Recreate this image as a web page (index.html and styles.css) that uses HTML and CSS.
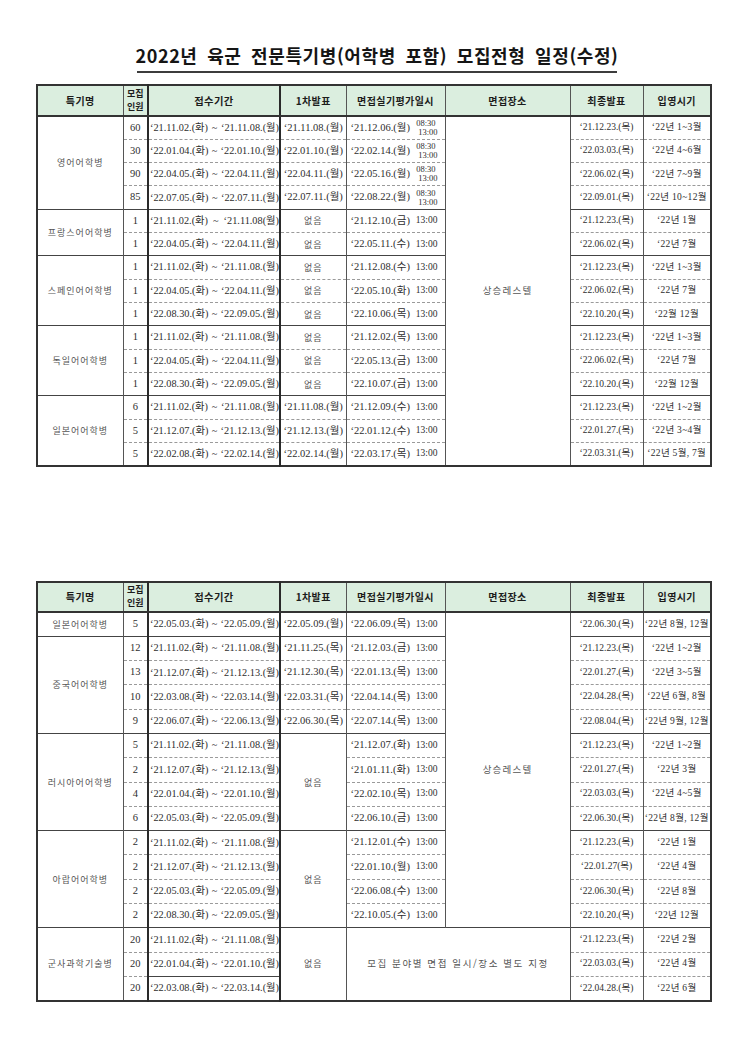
FILE: index.html
```html
<!DOCTYPE html>
<html lang="ko">
<head>
<meta charset="utf-8">
<title>2022년 육군 전문특기병 모집전형 일정</title>
<link rel="stylesheet" href="styles.css">
</head>
<body>
<div class="page">
  <div class="title-wrap">
    <h1 class="title">2022년 육군 전문특기병(어학병 포함) 모집전형 일정(수정)</h1>
    <div class="rule"></div>
  </div>

  <table class="sched t1">
    <colgroup>
      <col class="c-name"><col class="c-cnt"><col class="c-rcv"><col class="c-first"><col class="c-iv"><col class="c-place"><col class="c-fin"><col class="c-ent">
    </colgroup>
    <thead>
      <tr>
        <th>특기명</th><th class="two">모집<br>인원</th><th class="rcv">접수기간</th><th>1차발표</th><th>면접실기평가일시</th><th>면접장소</th><th>최종발표</th><th>입영시기</th>
      </tr>
    </thead>
    <tbody>
      <tr class="g">
        <td class="name" rowspan="4">영어어학병</td><td class="cnt">60</td>
        <td class="rcv"><div class="rng"><span>‘21.11.02.(화)</span><span>~</span><span>‘21.11.08.(월)</span></div></td>
        <td class="dt">‘21.11.08.(월)</td>
        <td><div class="iv"><span>‘21.12.06.(월)</span><span class="tt"><span class="t8">08:30</span><span>13:00</span></span></div></td>
        <td class="place" rowspan="15">상승레스텔</td>
        <td class="fin">‘21.12.23.(목)</td><td class="ent">‘22년 1~3월</td>
      </tr>
      <tr class="s">
        <td class="cnt">30</td>
        <td class="rcv"><div class="rng"><span>‘22.01.04.(화)</span><span>~</span><span>‘22.01.10.(월)</span></div></td>
        <td class="dt">‘22.01.10.(월)</td>
        <td><div class="iv"><span>‘22.02.14.(월)</span><span class="tt"><span class="t8">08:30</span><span>13:00</span></span></div></td>
        <td class="fin">‘22.03.03.(목)</td><td class="ent">‘22년 4~6월</td>
      </tr>
      <tr class="s">
        <td class="cnt">90</td>
        <td class="rcv"><div class="rng"><span>‘22.04.05.(화)</span><span>~</span><span>‘22.04.11.(월)</span></div></td>
        <td class="dt">‘22.04.11.(월)</td>
        <td><div class="iv"><span>‘22.05.16.(월)</span><span class="tt"><span class="t8">08:30</span><span>13:00</span></span></div></td>
        <td class="fin">‘22.06.02.(목)</td><td class="ent">‘22년 7~9월</td>
      </tr>
      <tr class="s">
        <td class="cnt">85</td>
        <td class="rcv"><div class="rng"><span>‘22.07.05.(화)</span><span>~</span><span>‘22.07.11.(월)</span></div></td>
        <td class="dt">‘22.07.11.(월)</td>
        <td><div class="iv"><span>‘22.08.22.(월)</span><span class="tt"><span class="t8">08:30</span><span>13:00</span></span></div></td>
        <td class="fin">‘22.09.01.(목)</td><td class="ent">‘22년 10~12월</td>
      </tr>

      <tr class="g">
        <td class="name" rowspan="2">프랑스어어학병</td><td class="cnt">1</td>
        <td class="rcv"><div class="rng"><span>‘21.11.02.(화)</span><span>~</span><span>‘21.11.08(월)</span></div></td>
        <td class="ko">없음</td>
        <td><div class="iv"><span>‘21.12.10.(금)</span><span class="tm">13:00</span></div></td>
        <td class="fin">‘21.12.23.(목)</td><td class="ent">‘22년 1월</td>
      </tr>
      <tr class="s">
        <td class="cnt">1</td>
        <td class="rcv"><div class="rng"><span>‘22.04.05.(화)</span><span>~</span><span>‘22.04.11.(월)</span></div></td>
        <td class="ko">없음</td>
        <td><div class="iv"><span>‘22.05.11.(수)</span><span class="tm">13:00</span></div></td>
        <td class="fin">‘22.06.02.(목)</td><td class="ent">‘22년 7월</td>
      </tr>

      <tr class="g">
        <td class="name" rowspan="3">스페인어어학병</td><td class="cnt">1</td>
        <td class="rcv"><div class="rng"><span>‘21.11.02.(화)</span><span>~</span><span>‘21.11.08.(월)</span></div></td>
        <td class="ko">없음</td>
        <td><div class="iv"><span>‘21.12.08.(수)</span><span class="tm">13:00</span></div></td>
        <td class="fin">‘21.12.23.(목)</td><td class="ent">‘22년 1~3월</td>
      </tr>
      <tr class="s">
        <td class="cnt">1</td>
        <td class="rcv"><div class="rng"><span>‘22.04.05.(화)</span><span>~</span><span>‘22.04.11.(월)</span></div></td>
        <td class="ko">없음</td>
        <td><div class="iv"><span>‘22.05.10.(화)</span><span class="tm">13:00</span></div></td>
        <td class="fin">‘22.06.02.(목)</td><td class="ent">‘22년 7월</td>
      </tr>
      <tr class="s">
        <td class="cnt">1</td>
        <td class="rcv"><div class="rng"><span>‘22.08.30.(화)</span><span>~</span><span>‘22.09.05.(월)</span></div></td>
        <td class="ko">없음</td>
        <td><div class="iv"><span>‘22.10.06.(목)</span><span class="tm">13:00</span></div></td>
        <td class="fin">‘22.10.20.(목)</td><td class="ent">‘22월 12월</td>
      </tr>

      <tr class="g">
        <td class="name" rowspan="3">독일어어학병</td><td class="cnt">1</td>
        <td class="rcv"><div class="rng"><span>‘21.11.02.(화)</span><span>~</span><span>‘21.11.08.(월)</span></div></td>
        <td class="ko">없음</td>
        <td><div class="iv"><span>‘21.12.02.(목)</span><span class="tm">13:00</span></div></td>
        <td class="fin">‘21.12.23.(목)</td><td class="ent">‘22년 1~3월</td>
      </tr>
      <tr class="s">
        <td class="cnt">1</td>
        <td class="rcv"><div class="rng"><span>‘22.04.05.(화)</span><span>~</span><span>‘22.04.11.(월)</span></div></td>
        <td class="ko">없음</td>
        <td><div class="iv"><span>‘22.05.13.(금)</span><span class="tm">13:00</span></div></td>
        <td class="fin">‘22.06.02.(목)</td><td class="ent">‘22년 7월</td>
      </tr>
      <tr class="s">
        <td class="cnt">1</td>
        <td class="rcv"><div class="rng"><span>‘22.08.30.(화)</span><span>~</span><span>‘22.09.05.(월)</span></div></td>
        <td class="ko">없음</td>
        <td><div class="iv"><span>‘22.10.07.(금)</span><span class="tm">13:00</span></div></td>
        <td class="fin">‘22.10.20.(목)</td><td class="ent">‘22월 12월</td>
      </tr>

      <tr class="g">
        <td class="name" rowspan="3">일본어어학병</td><td class="cnt">6</td>
        <td class="rcv"><div class="rng"><span>‘21.11.02.(화)</span><span>~</span><span>‘21.11.08.(월)</span></div></td>
        <td class="dt">‘21.11.08.(월)</td>
        <td><div class="iv"><span>‘21.12.09.(수)</span><span class="tm">13:00</span></div></td>
        <td class="fin">‘21.12.23.(목)</td><td class="ent">‘22년 1~2월</td>
      </tr>
      <tr class="s">
        <td class="cnt">5</td>
        <td class="rcv"><div class="rng"><span>‘21.12.07.(화)</span><span>~</span><span>‘21.12.13.(월)</span></div></td>
        <td class="dt">‘21.12.13.(월)</td>
        <td><div class="iv"><span>‘22.01.12.(수)</span><span class="tm">13:00</span></div></td>
        <td class="fin">‘22.01.27.(목)</td><td class="ent">‘22년 3~4월</td>
      </tr>
      <tr class="s">
        <td class="cnt">5</td>
        <td class="rcv"><div class="rng"><span>‘22.02.08.(화)</span><span>~</span><span>‘22.02.14.(월)</span></div></td>
        <td class="dt">‘22.02.14.(월)</td>
        <td><div class="iv"><span>‘22.03.17.(목)</span><span class="tm">13:00</span></div></td>
        <td class="fin">‘22.03.31.(목)</td><td class="ent">‘22년 5월, 7월</td>
      </tr>
    </tbody>
  </table>

  <table class="sched t2">
    <colgroup>
      <col class="c-name"><col class="c-cnt"><col class="c-rcv"><col class="c-first"><col class="c-iv"><col class="c-place"><col class="c-fin"><col class="c-ent">
    </colgroup>
    <thead>
      <tr>
        <th>특기명</th><th class="two">모집<br>인원</th><th class="rcv">접수기간</th><th>1차발표</th><th>면접실기평가일시</th><th>면접장소</th><th>최종발표</th><th>입영시기</th>
      </tr>
    </thead>
    <tbody>
      <tr class="g">
        <td class="name">일본어어학병</td><td class="cnt">5</td>
        <td class="rcv"><div class="rng"><span>‘22.05.03.(화)</span><span>~</span><span>‘22.05.09.(월)</span></div></td>
        <td class="dt">‘22.05.09.(월)</td>
        <td><div class="iv"><span>‘22.06.09.(목)</span><span class="tm">13:00</span></div></td>
        <td class="place" rowspan="13">상승레스텔</td>
        <td class="fin">‘22.06.30.(목)</td><td class="ent">‘22년 8월, 12월</td>
      </tr>

      <tr class="g">
        <td class="name" rowspan="4">중국어어학병</td><td class="cnt">12</td>
        <td class="rcv"><div class="rng"><span>‘21.11.02.(화)</span><span>~</span><span>‘21.11.08.(월)</span></div></td>
        <td class="dt">‘21.11.25.(목)</td>
        <td><div class="iv"><span>‘21.12.03.(금)</span><span class="tm">13:00</span></div></td>
        <td class="fin">‘21.12.23.(목)</td><td class="ent">‘22년 1~2월</td>
      </tr>
      <tr class="s">
        <td class="cnt">13</td>
        <td class="rcv"><div class="rng"><span>‘21.12.07.(화)</span><span>~</span><span>‘21.12.13.(월)</span></div></td>
        <td class="dt">‘21.12.30.(목)</td>
        <td><div class="iv"><span>‘22.01.13.(목)</span><span class="tm">13:00</span></div></td>
        <td class="fin">‘22.01.27.(목)</td><td class="ent">‘22년 3~5월</td>
      </tr>
      <tr class="s">
        <td class="cnt">10</td>
        <td class="rcv"><div class="rng"><span>‘22.03.08.(화)</span><span>~</span><span>‘22.03.14.(월)</span></div></td>
        <td class="dt">‘22.03.31.(목)</td>
        <td><div class="iv"><span>‘22.04.14.(목)</span><span class="tm">13:00</span></div></td>
        <td class="fin">‘22.04.28.(목)</td><td class="ent">‘22년 6월, 8월</td>
      </tr>
      <tr class="s">
        <td class="cnt">9</td>
        <td class="rcv"><div class="rng"><span>‘22.06.07.(화)</span><span>~</span><span>‘22.06.13.(월)</span></div></td>
        <td class="dt">‘22.06.30.(목)</td>
        <td><div class="iv"><span>‘22.07.14.(목)</span><span class="tm">13:00</span></div></td>
        <td class="fin">‘22.08.04.(목)</td><td class="ent">‘22년 9월, 12월</td>
      </tr>

      <tr class="g">
        <td class="name" rowspan="4">러시아어어학병</td><td class="cnt">5</td>
        <td class="rcv"><div class="rng"><span>‘21.11.02.(화)</span><span>~</span><span>‘21.11.08.(월)</span></div></td>
        <td class="ko" rowspan="4">없음</td>
        <td><div class="iv"><span>‘21.12.07.(화)</span><span class="tm">13:00</span></div></td>
        <td class="fin">‘21.12.23.(목)</td><td class="ent">‘22년 1~2월</td>
      </tr>
      <tr class="s">
        <td class="cnt">2</td>
        <td class="rcv"><div class="rng"><span>‘21.12.07.(화)</span><span>~</span><span>‘21.12.13.(월)</span></div></td>
        <td><div class="iv"><span>‘21.01.11.(화)</span><span class="tm">13:00</span></div></td>
        <td class="fin">‘22.01.27.(목)</td><td class="ent">‘22년 3월</td>
      </tr>
      <tr class="s">
        <td class="cnt">4</td>
        <td class="rcv"><div class="rng"><span>‘22.01.04.(화)</span><span>~</span><span>‘22.01.10.(월)</span></div></td>
        <td><div class="iv"><span>‘22.02.10.(목)</span><span class="tm">13:00</span></div></td>
        <td class="fin">‘22.03.03.(목)</td><td class="ent">‘22년 4~5월</td>
      </tr>
      <tr class="s">
        <td class="cnt">6</td>
        <td class="rcv"><div class="rng"><span>‘22.05.03.(화)</span><span>~</span><span>‘22.05.09.(월)</span></div></td>
        <td><div class="iv"><span>‘22.06.10.(금)</span><span class="tm">13:00</span></div></td>
        <td class="fin">‘22.06.30.(목)</td><td class="ent">‘22년 8월, 12월</td>
      </tr>

      <tr class="g">
        <td class="name" rowspan="4">아랍어어학병</td><td class="cnt">2</td>
        <td class="rcv"><div class="rng"><span>‘21.11.02.(화)</span><span>~</span><span>‘21.11.08.(월)</span></div></td>
        <td class="ko" rowspan="4">없음</td>
        <td><div class="iv"><span>‘21.12.01.(수)</span><span class="tm">13:00</span></div></td>
        <td class="fin">‘21.12.23.(목)</td><td class="ent">‘22년 1월</td>
      </tr>
      <tr class="s">
        <td class="cnt">2</td>
        <td class="rcv"><div class="rng"><span>‘21.12.07.(화)</span><span>~</span><span>‘21.12.13.(월)</span></div></td>
        <td><div class="iv"><span>‘22.01.10.(월)</span><span class="tm">13:00</span></div></td>
        <td class="fin">‘22.01.27(목)</td><td class="ent">‘22년 4월</td>
      </tr>
      <tr class="s">
        <td class="cnt">2</td>
        <td class="rcv"><div class="rng"><span>‘22.05.03.(화)</span><span>~</span><span>‘22.05.09.(월)</span></div></td>
        <td><div class="iv"><span>‘22.06.08.(수)</span><span class="tm">13:00</span></div></td>
        <td class="fin">‘22.06.30.(목)</td><td class="ent">‘22년 8월</td>
      </tr>
      <tr class="s">
        <td class="cnt">2</td>
        <td class="rcv"><div class="rng"><span>‘22.08.30.(화)</span><span>~</span><span>‘22.09.05.(월)</span></div></td>
        <td><div class="iv"><span>‘22.10.05.(수)</span><span class="tm">13:00</span></div></td>
        <td class="fin">‘22.10.20.(목)</td><td class="ent">‘22년 12월</td>
      </tr>

      <tr class="g">
        <td class="name" rowspan="3">군사과학기술병</td><td class="cnt">20</td>
        <td class="rcv"><div class="rng"><span>‘21.11.02.(화)</span><span>~</span><span>‘21.11.08.(월)</span></div></td>
        <td class="ko" rowspan="3">없음</td>
        <td class="ko wide" colspan="2" rowspan="3">모집 분야별 면접 일시/장소 별도 지정</td>
        <td class="fin">‘21.12.23.(목)</td><td class="ent">‘22년 2월</td>
      </tr>
      <tr class="s">
        <td class="cnt">20</td>
        <td class="rcv"><div class="rng"><span>‘22.01.04.(화)</span><span>~</span><span>‘22.01.10.(월)</span></div></td>
        <td class="fin">‘22.03.03.(목)</td><td class="ent">‘22년 4월</td>
      </tr>
      <tr class="s solid-rcv">
        <td class="cnt">20</td>
        <td class="rcv"><div class="rng"><span>‘22.03.08.(화)</span><span>~</span><span>‘22.03.14.(월)</span></div></td>
        <td class="fin">‘22.04.28.(목)</td><td class="ent">‘22년 6월</td>
      </tr>
    </tbody>
  </table>
</div>
</body>
</html>
```

FILE: styles.css
```css
* { box-sizing: border-box; }

body {
  margin: 0;
  background: #ffffff;
  font-family: "Liberation Serif", "Noto Sans CJK KR", serif;
  color: #2e2e2e;
}

.page {
  width: 743px;
  padding: 43px 0 40px 36px;
}

.title-wrap {
  width: 674px;
  display: flex;
  flex-direction: column;
  align-items: center;
}

.title {
  margin: 0 0 0 8px;
  font-family: "Noto Sans CJK KR", sans-serif;
  font-weight: 700;
  font-size: 18px;
  line-height: 24px;
  letter-spacing: 0.6px;
  word-spacing: 4px;
  color: #151515;
}

.rule {
  width: 480px;
  margin: 4px 0 0 8px;
  border-top: 2px solid #3c3c3c;
}

.sched {
  width: 674px;
  border-collapse: collapse;
  table-layout: fixed;
  border: 2px solid #333;
}

.t1 { margin-top: 11px; }
.t2 { margin-top: 114px; }

.c-name  { width: 86px; }
.c-cnt   { width: 25px; }
.c-rcv   { width: 132px; }
.c-first { width: 66px; }
.c-iv    { width: 99px; }
.c-place { width: 125px; }
.c-fin   { width: 73px; }
.c-ent   { width: 68px; }

.t1 thead tr { height: 31px; }
.t1 tbody tr { height: 23.33px; }
.t2 thead tr { height: 30px; }
.t2 tbody tr { height: 24.3px; }

th {
  padding: 0;
  background: #dbeedf;
  border: 1px solid #555;
  border-bottom: 2px solid #333;
  font-family: "Noto Sans CJK KR", sans-serif;
  font-weight: 700;
  font-size: 10px;
  line-height: 12px;
  letter-spacing: 0.4px;
  color: #1c1c1c;
  text-align: center;
  vertical-align: middle;
}

th.two { font-size: 9px; line-height: 12.5px; letter-spacing: 0; }

td {
  padding: 0;
  border-left: 1px solid #555;
  border-right: 1px solid #555;
  font-size: 10.5px;
  line-height: 1;
  text-align: center;
  vertical-align: middle;
  white-space: nowrap;
  overflow: visible;
}

tr.g td { border-top: 1px solid #444; }
tr.s td { border-top: 1px dashed #9a9a9a; }
tr.solid-rcv td.rcv { border-top: 1px solid #444; }

th.rcv, td.rcv {
  border-left: 2px solid #2a2a2a;
  border-right: 2px solid #2a2a2a;
}

.rcv { font-size: 10.3px; }

.name, .ko, .place {
  font-family: "Noto Sans CJK KR", sans-serif;
  font-size: 9px;
  letter-spacing: 1px;
  color: #555;
}

.place { font-size: 9.5px; letter-spacing: 1.2px; }
.wide { font-size: 9.5px; letter-spacing: 1.6px; }

.cnt { font-size: 10.5px; }

.rng {
  display: flex;
  justify-content: space-between;
  align-items: center;
  padding: 0 0 0 1px;
}

.dt { font-size: 10.5px; }

.iv {
  display: flex;
  justify-content: space-between;
  align-items: center;
  padding: 0 7px 0 4px;
}

.tm { font-size: 9.5px; }

.tt {
  display: flex;
  flex-direction: column;
  align-items: flex-end;
  font-size: 8.5px;
  line-height: 9px;
}

.t8 { padding-right: 2px; }

.fin { font-size: 9.5px; }

.ent { font-size: 9.5px; letter-spacing: 0.3px; }
```
